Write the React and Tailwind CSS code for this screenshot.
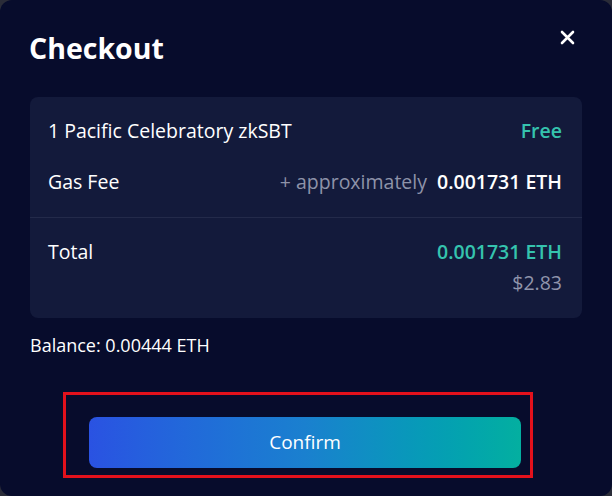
// Checkout modal: resumen de compra con tarifa de gas y botón de confirmación.

const ROWS = [
  { label: "1 Pacific Celebratory zkSBT", value: "Free" },
];

function CloseIcon() {
  return (
    <svg width="15" height="15" viewBox="0 0 15 15" fill="none">
      <path d="M2 2L13 13M13 2L2 13" stroke="white" strokeWidth="2.6" strokeLinecap="round" />
    </svg>
  );
}

export default function App() {
  return (
    <div
      className="h-[496px] w-[612px] bg-[#2a2c38]"
      style={{ fontFamily: "'Open Sans', 'Noto Sans', sans-serif" }}
    >
      <div className="flex h-full w-full flex-col rounded-xl bg-[#070c2c] px-[30px]">
        {/* Encabezado */}
        <div className="flex items-start justify-between pt-[30px]">
          <h1 className="-ml-px text-[28.5px] font-bold leading-9 text-white">Checkout</h1>
          <button className="mr-[7px] mt-0 p-0">
            <CloseIcon />
          </button>
        </div>

        {/* Resumen */}
        <div className="mt-[31px] rounded-lg bg-[#131a3b]">
          <div className="pb-[22px] pl-[18px] pr-[20px] pt-[21px]">
            {ROWS.map((r) => (
              <div key={r.label} className="flex items-center justify-between leading-[26px]">
                <span className="text-[19.5px] text-white">{r.label}</span>
                <span className="text-[19.5px] font-semibold text-[#35c3ae]">{r.value}</span>
              </div>
            ))}
            <div className="mt-[25px] flex items-center justify-between leading-[26px]">
              <span className="text-[19.5px] text-white">Gas Fee</span>
              <span className="flex items-center gap-[10px]">
                <span className="text-[19.5px] text-[#8e93a9]">+ approximately</span>
                <span className="text-[19.5px] font-semibold text-white">0.001731 ETH</span>
              </span>
            </div>
          </div>
          <div className="h-px bg-[#232a4a]" />
          <div className="flex justify-between pb-[22px] pl-[18px] pr-[20px] pt-[21px] leading-[26px]">
            <span className="text-[19.5px] text-white">Total</span>
            <div className="flex flex-col items-end gap-[5px]">
              <span className="text-[19.5px] font-semibold text-[#35c3ae]">0.001731 ETH</span>
              <span className="text-[19.5px] text-[#9094ab]">$2.83</span>
            </div>
          </div>
        </div>

        <p className="mt-[16px] text-[18px] leading-[22px] text-white">Balance: 0.00444 ETH</p>

        {/* Botón resaltado */}
        <div className="ml-[33px] mt-[36px] w-[470px] border-[3px] border-[#e3111c] pb-[7px] pl-[23px] pr-[9px] pt-[22px]">
          <button className="flex h-[51px] w-full items-center justify-center rounded-lg bg-gradient-to-r from-[#2a52e2] via-[#1a80cf] to-[#04afa0] text-[19px] text-white">
            Confirm
          </button>
        </div>
      </div>
    </div>
  );
}
